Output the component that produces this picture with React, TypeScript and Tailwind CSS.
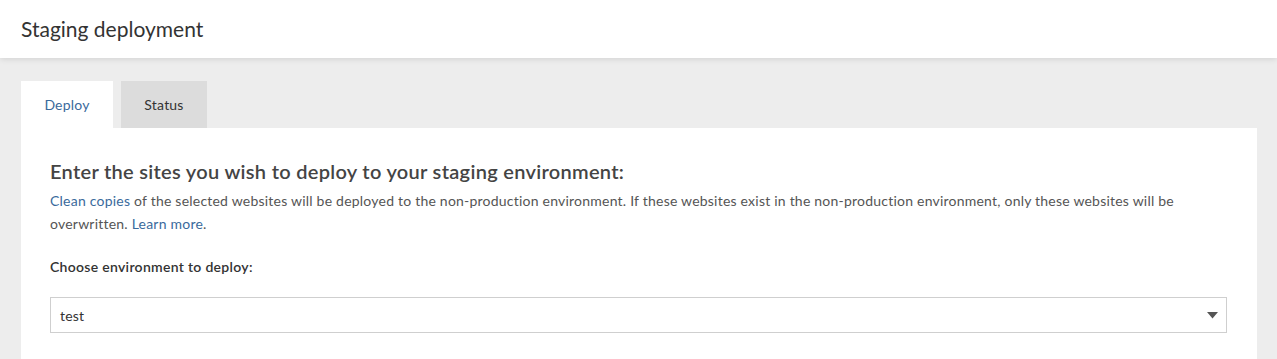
import { useState } from "react";

const font = { fontFamily: "Lato, 'Open Sans', 'Liberation Sans', sans-serif" };

export default function App() {
    const [tab, setTab] = useState("deploy");

    return (
        <div className="min-h-[359px] bg-[#ededed] text-[#333]" style={font}>
            <header className="h-[58px] bg-white flex items-center px-[21px] shadow-[0_1px_6px_rgba(0,0,0,0.12)] relative">
                <h1 className="text-[21px] text-[#333]">Staging deployment</h1>
            </header>

            <div className="pl-[21px] pr-[20px] pt-[23px]">
                <div className="flex gap-[8px]">
                    <button
                        onClick={() => setTab("deploy")}
                        className={`h-[47px] w-[92px] text-[14px] tracking-[0.2px] ${tab === "deploy" ? "bg-white text-[#3a6a9c]" : "bg-[#dcdcdc] text-[#333]"}`}
                    >
                        Deploy
                    </button>
                    <button
                        onClick={() => setTab("status")}
                        className={`h-[47px] w-[86px] text-[14px] tracking-[0.2px] ${tab === "status" ? "bg-white text-[#3a6a9c]" : "bg-[#dcdcdc] text-[#333]"}`}
                    >
                        Status
                    </button>
                </div>

                <div className="bg-white pl-[29px] pr-[30px] pt-[29px] pb-[30px]">
                    <h2 className="text-[20px] font-semibold text-[#444] leading-[28px] tracking-[0.3px]">
                        Enter the sites you wish to deploy to your staging environment:
                    </h2>
                    <p className="mt-[4px] text-[14px] leading-[23px] text-[#555] tracking-[0.22px]">
                        <a href="#" className="text-[#3a6a9c]">Clean copies</a> of the selected websites will be deployed to the non-production environment. If these websites exist in the non-production environment, only these websites will be overwritten. <a href="#" className="text-[#3a6a9c]">Learn more</a>.
                    </p>
                    <label className="block mt-[22px] text-[14px] font-semibold text-[#333] leading-[20px] tracking-[0.3px]">
                        Choose environment to deploy:
                    </label>
                    <div className="mt-[20px] h-[36px] border border-[#cfcfcf] flex items-center justify-between pl-[9px] pr-[8px]">
                        <span className="text-[14px] text-[#333] tracking-[0.2px]">test</span>
                        <svg width="11" height="7" viewBox="0 0 11 7">
                            <path d="M0 0 L11 0 L5.5 6.5 Z" fill="#555" />
                        </svg>
                    </div>
                </div>
            </div>
        </div>
    );
}
